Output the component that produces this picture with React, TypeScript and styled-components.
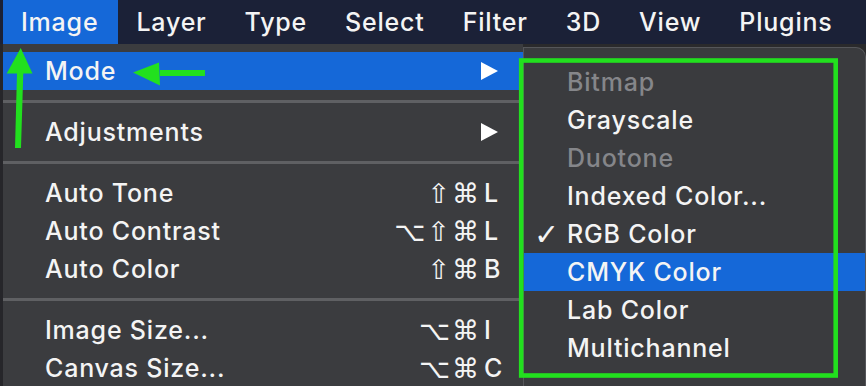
import * as React from 'react';
import styled, { createGlobalStyle } from 'styled-components';

const GlobalStyle = createGlobalStyle`
  body {
    margin: 0;
    background: #2a2a2c;
    font-family: Inter, 'Liberation Sans', 'DejaVu Sans', sans-serif;
  }
`;

const topItems = ['Image', 'Layer', 'Type', 'Select', 'Filter', '3D', 'View', 'Plugins'];

type Entry =
  | { kind: 'sep' }
  | { kind: 'item'; label: string; sub?: boolean; active?: boolean; mods?: string; keyChar?: string };

const entries: Entry[] = [
  { kind: 'item', label: 'Mode', sub: true, active: true },
  { kind: 'sep' },
  { kind: 'item', label: 'Adjustments', sub: true },
  { kind: 'sep' },
  { kind: 'item', label: 'Auto Tone', mods: '⇧⌘', keyChar: 'L' },
  { kind: 'item', label: 'Auto Contrast', mods: '⌥⇧⌘', keyChar: 'L' },
  { kind: 'item', label: 'Auto Color', mods: '⇧⌘', keyChar: 'B' },
  { kind: 'sep' },
  { kind: 'item', label: 'Image Size...', mods: '⌥⌘', keyChar: 'I' },
  { kind: 'item', label: 'Canvas Size...', mods: '⌥⌘', keyChar: 'C' },
];

const modes = [
  { label: 'Bitmap', disabled: true },
  { label: 'Grayscale' },
  { label: 'Duotone', disabled: true },
  { label: 'Indexed Color...' },
  { label: 'RGB Color', checked: true },
  { label: 'CMYK Color', active: true },
  { label: 'Lab Color' },
  { label: 'Multichannel' },
];

const App = () => {
  return (
    <Page>
      <GlobalStyle />
      <MenuBar>
        {topItems.map((t, i) => (
          <TopItem key={t} $active={i === 0}>
            {t}
          </TopItem>
        ))}
      </MenuBar>

      <Body>
        <MainMenu>
          {entries.map((e, i) =>
            e.kind === 'sep' ? (
              <Separator key={i} />
            ) : (
              <Row key={i} $active={e.active}>
                <Label>{e.label}</Label>
                {e.sub && <SubArrow />}
                {e.mods && (
                  <Shortcut>
                    <Mods>{e.mods}</Mods>
                    <KeyChar>{e.keyChar}</KeyChar>
                  </Shortcut>
                )}
              </Row>
            )
          )}
        </MainMenu>

        <SubMenu>
          {modes.map(m => (
            <SubRow key={m.label} $active={m.active} $disabled={m.disabled}>
              <Check>{m.checked ? '✓' : ''}</Check>
              <Label>{m.label}</Label>
            </SubRow>
          ))}
        </SubMenu>
      </Body>

      <Annotations width="866" height="386" viewBox="0 0 866 386">
        <rect x="521.2" y="60.5" width="314.5" height="315" fill="none" stroke="#22e01e" strokeWidth="4.6" />
        <polygon points="17,73 23.3,73 21,148 15,148" fill="#22e01e" />
        <polygon points="20.7,48 32.5,73.5 6.7,73.5" fill="#22e01e" />
        <polygon points="160,70 205,70 205,76 160,76" fill="#22e01e" />
        <polygon points="133,72.5 159,62.5 160,85.5" fill="#22e01e" />
      </Annotations>
    </Page>
  );
};

const Page = styled.div`
  position: relative;
  width: 866px;
  height: 386px;
  overflow: hidden;
  display: flex;
  flex-direction: column;
  background: #2a2a2c;
  color: #f4f4f4;
  font-size: 25px;
  font-weight: 500;
`;

const MenuBar = styled.div`
  height: 44px;
  flex: none;
  display: flex;
  align-items: stretch;
  padding-left: 3px;
  background: #1b2137;
`;

const TopItem = styled.div<{ $active?: boolean }>`
  display: flex;
  align-items: center;
  padding: 0 20px 0 18px;
  letter-spacing: 0.8px;
  background: ${p => (p.$active ? '#1568d8' : 'transparent')};
`;

const Body = styled.div`
  flex: 1;
  display: flex;
  align-items: stretch;
`;

const MainMenu = styled.div`
  width: 520px;
  flex: none;
  border-left: 3px solid #26262a;
  padding-top: 8px;
  background: #3b3c3f;
`;

const Row = styled.div<{ $active?: boolean }>`
  height: 38px;
  display: flex;
  align-items: center;
  padding: 0 19px 0 42px;
  background: ${p => (p.$active ? '#1568d8' : 'transparent')};
`;

const Label = styled.span`
  flex: 1;
  letter-spacing: 0.8px;
  white-space: nowrap;
`;

const SubArrow = styled.span`
  width: 0;
  height: 0;
  margin-right: 6px;
  border-left: 17px solid #fff;
  border-top: 9px solid transparent;
  border-bottom: 9px solid transparent;
`;

const Shortcut = styled.span`
  display: flex;
  align-items: center;
`;

const Mods = styled.span`
  font-family: 'DejaVu Sans', sans-serif;
  font-size: 27px;
  font-weight: 400;
  letter-spacing: 2px;
  margin-right: 3px;
`;

const KeyChar = styled.span`
  width: 20px;
`;

const Separator = styled.div`
  height: 23px;
  display: flex;
  align-items: center;

  &:after {
    content: '';
    width: 100%;
    height: 3px;
    background: #5f6063;
  }
`;

const SubMenu = styled.div`
  flex: 1;
  margin-top: 3px;
  padding-top: 15px;
  border: 1px solid #55565a;
  border-bottom: none;
  border-top-right-radius: 10px;
  background: #3a3b3e;
`;

const SubRow = styled.div<{ $active?: boolean; $disabled?: boolean }>`
  height: 38px;
  display: flex;
  align-items: center;
  padding-left: 10px;
  color: ${p => (p.$disabled ? '#85868a' : '#f4f4f4')};
  background: ${p => (p.$active ? '#1568d8' : 'transparent')};
`;

const Check = styled.span`
  width: 33px;
  font-family: 'DejaVu Sans', sans-serif;
  font-size: 30px;
  font-weight: 700;
`;

const Annotations = styled.svg`
  position: absolute;
  left: 0;
  top: 0;
  pointer-events: none;
`;

export default App;
